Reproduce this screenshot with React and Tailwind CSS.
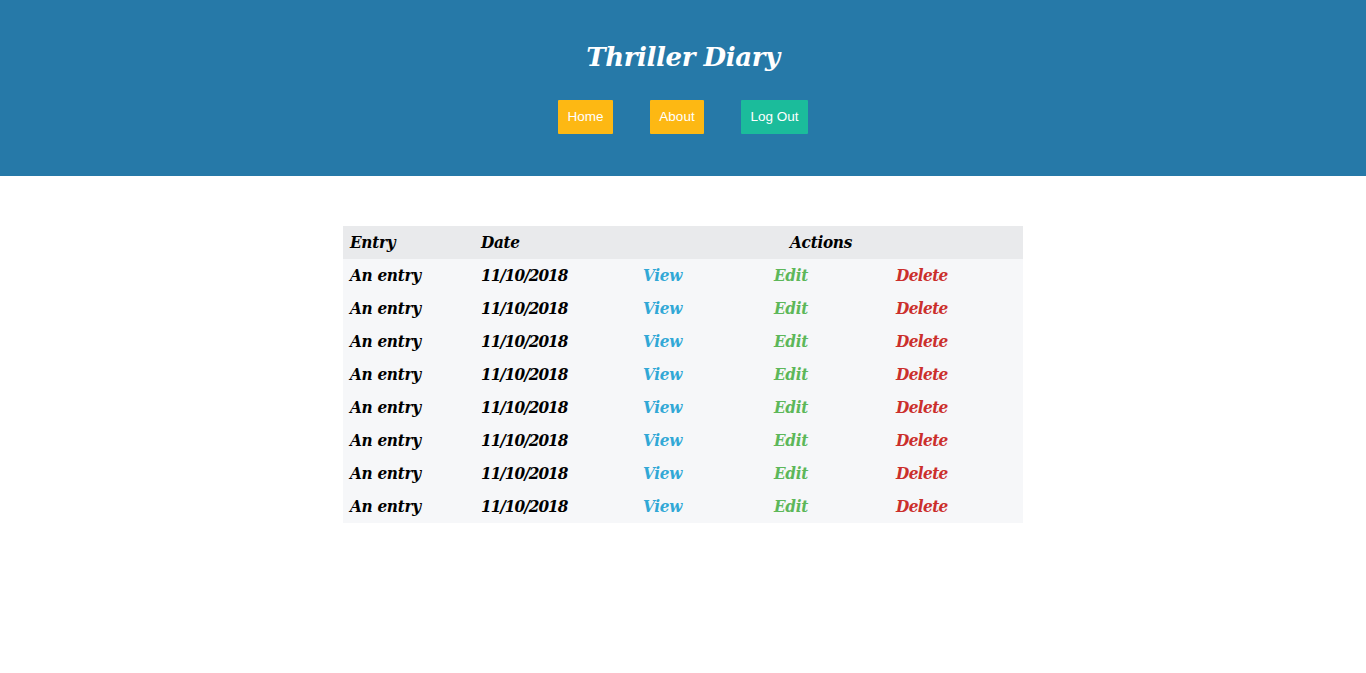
const ROWS = Array.from({ length: 8 }, () => ({ entry: 'An entry', date: '11/10/2018' }));

const serif = "font-['DejaVu_Serif',serif] italic font-bold";
const serifTable = "font-['DejaVu_Serif_Condensed','DejaVu_Serif',serif] italic font-bold";

export default function App() {
  return (
    <div className="min-h-[673px] bg-white">
      {/* header */}
      <header className="h-[176px] bg-[#2679a8] flex flex-col items-center pt-[38px]">
        <h1 className={`${serif} text-white text-[26px] leading-[38px] tracking-[-0.4px]`}>Thriller Diary</h1>
        <nav className="flex gap-[37px] mt-[24px] font-['Liberation_Sans',sans-serif] text-[13.5px] text-white">
          <a className="h-[34px] w-[55px] flex items-center justify-center bg-[#fdb813] rounded-[1px]">Home</a>
          <a className="h-[34px] w-[54px] flex items-center justify-center bg-[#fdb813] rounded-[1px]">About</a>
          <a className="h-[34px] w-[67px] flex items-center justify-center bg-[#1bbc9b] rounded-[1px]">Log Out</a>
        </nav>
      </header>

      {/* entries table */}
      <div className={`mt-[50px] mx-auto w-[680px] ${serifTable} text-[17px] tracking-[-0.3px]`}>
        <div className="grid grid-cols-[131px_162px_131px_122px_134px] h-[33px] items-center bg-[#e9eaec] text-black">
          <div className="pl-[7px]">Entry</div>
          <div className="pl-[7px]">Date</div>
          <div className="col-span-3 text-center pr-[17px]">Actions</div>
        </div>
        <div className="bg-[#f6f7f9]">
          {ROWS.map((r, i) => (
            <div key={i} className="grid grid-cols-[131px_162px_131px_122px_134px] h-[33px] items-center">
              <div className="pl-[7px] text-black">{r.entry}</div>
              <div className="pl-[7px] text-black tracking-[-1px]">{r.date}</div>
              <div className="pl-[7px] text-[#31a8d6]">View</div>
              <div className="pl-[7px] text-[#5db75a]">Edit</div>
              <div className="pl-[7px] text-[#cb2f2c] tracking-[-0.6px]">Delete</div>
            </div>
          ))}
        </div>
      </div>
    </div>
  );
}
